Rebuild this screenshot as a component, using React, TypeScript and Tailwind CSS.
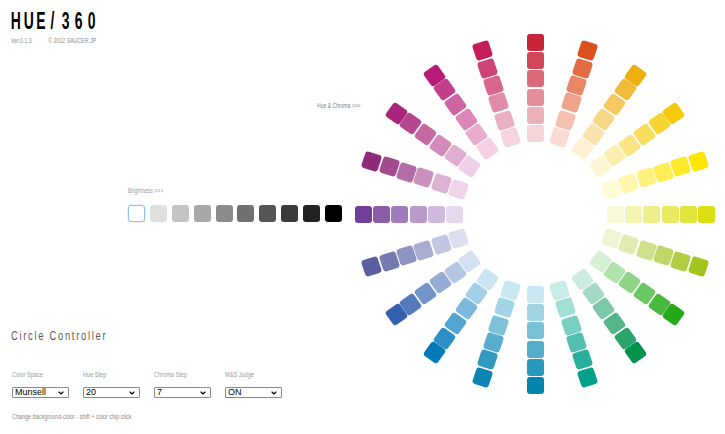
import { ChevronDown } from 'lucide-react'

// spoke angle (deg, 90 = up) -> [inner (lightest), outer (most saturated)]
const spokes: [number, string, string][] = [
  [90, '#f6d5da', '#c82339'],
  [72, '#fadcd4', '#dc501f'],
  [54, '#fdf0d5', '#eeaf10'],
  [36, '#fdf6d5', '#f5ca0c'],
  [18, '#fffbd5', '#ffe500'],
  [0, '#f8f9d8', '#dbe014'],
  [-18, '#eef5d5', '#a3c31f'],
  [-36, '#d5f0d2', '#23ab17'],
  [-54, '#cdebe0', '#03924e'],
  [-72, '#c8ede8', '#03a08a'],
  [-90, '#cbe7f1', '#0086ad'],
  [-108, '#c8e9f1', '#0c85b4'],
  [-126, '#cce5f3', '#0479ba'],
  [-144, '#d5e0f0', '#3460ae'],
  [-162, '#dddff0', '#5a609f'],
  [180, '#e6d9ee', '#723e97'],
  [162, '#f0d5e8', '#8e2a78'],
  [144, '#f0d0e6', '#a8247a'],
  [126, '#f5d0e5', '#b81a78'],
  [108, '#f5d5df', '#c41e5a'],
]

const grays = ['#ffffff', '#e0e0e0', '#c4c4c4', '#a8a8a8', '#8c8c8c', '#707070', '#555555', '#3b3b3b', '#222222', '#000000']

const controls = [
  { label: 'Color Space', value: 'Munsell' },
  { label: 'Hue Step', value: '20' },
  { label: 'Chroma Step', value: '7' },
  { label: 'M&S Judge', value: 'ON' },
]

function mix(a: string, b: string, t: number) {
  const pa = [1, 3, 5].map(i => parseInt(a.slice(i, i + 2), 16))
  const pb = [1, 3, 5].map(i => parseInt(b.slice(i, i + 2), 16))
  return `rgb(${pa.map((v, i) => Math.round(v + (pb[i] - v) * t)).join(',')})`
}

function Wheel() {
  const c = 190
  return (
    <div className="relative w-[380px] h-[380px] mt-[24px] shrink-0">
      {spokes.map(([deg, inner, outer]) =>
        [0, 1, 2, 3, 4, 5].map(i => {
          const r = 80.5 + i * 18.2
          const a = (deg * Math.PI) / 180
          const x = c + r * Math.cos(a)
          const y = c - r * Math.sin(a)
          return (
            <div
              key={`${deg}-${i}`}
              className="absolute w-[17px] h-[17px] rounded-[3px]"
              style={{ left: x - 8.5, top: y - 8.5, background: mix(inner, outer, i / 5), transform: `rotate(${90 - deg}deg)` }}
            />
          )
        })
      )}
    </div>
  )
}

export default function App() {
  return (
    <div className="flex w-[725px] h-[434px] bg-white overflow-hidden font-['Liberation_Sans',sans-serif]">
      <div className="flex flex-col w-[345px] shrink-0">
        <h1 className="flex mt-[10px] ml-[7px] h-[22px] items-center text-[24px] font-bold text-black">
          {'HUE/360'.split('').map((ch, i) => (
            <span key={i} className="inline-block w-[13px] text-center leading-none">
              <span className="inline-block scale-x-[0.58]">{ch}</span>
            </span>
          ))}
        </h1>
        <div className="flex gap-[22px] mt-[5px] ml-[11px] text-[7px] text-[#8a8a8a] leading-none whitespace-nowrap origin-left scale-x-[0.75]">
          <span>Ver.0.1.3</span>
          <span>© 2012 SAUCER.JP</span>
        </div>

        <p className="mt-[58px] ml-[317px] whitespace-nowrap text-[7px] leading-none text-[#6f7f96] origin-left scale-x-[0.72]">Hue &amp; Chroma &gt;&gt;&gt;</p>

        <p className="mt-[78px] ml-[128px] whitespace-nowrap text-[7px] leading-none text-[#9a9a9a] origin-left scale-x-[0.75]">Brightness &gt;&gt;&gt;</p>
        <div className="flex gap-[4.9px] mt-[11px] ml-[128px]">
          {grays.map((g, i) => (
            <div
              key={g}
              className={`w-[17px] h-[17px] rounded-[3px] ${i === 0 ? 'border border-[#8fc2f5] shadow-[0_0_2px_#a8d0f8]' : ''}`}
              style={{ background: g }}
            />
          ))}
        </div>

        <h2 className="mt-[108px] ml-[11px] whitespace-nowrap text-[12px] leading-none tracking-[2.2px] text-[#5a5a5a] origin-left scale-x-[0.78]">Circle Controller</h2>

        <div className="flex gap-[14px] mt-[29px] ml-[12px]">
          {controls.map(ctl => (
            <div key={ctl.label} className="flex flex-col w-[57px]">
              <span className="whitespace-nowrap text-[7px] leading-none text-[#9a9a9a] origin-left scale-x-[0.8]">{ctl.label}</span>
              <div className="flex items-center justify-between mt-[9px] h-[11px] border border-[#8a8a8a] rounded-[1px] pl-[2px] pr-[3px] text-[9px] leading-none text-black">
                <span>{ctl.value}</span>
                <ChevronDown size={8} strokeWidth={3.5} />
              </div>
            </div>
          ))}
        </div>

        <p className="mt-[15px] ml-[12px] whitespace-nowrap text-[7px] leading-none text-[#8a8a8a] origin-left scale-x-[0.78]">Change background-color - shift + color chip click</p>
      </div>
      <Wheel />
    </div>
  )
}
